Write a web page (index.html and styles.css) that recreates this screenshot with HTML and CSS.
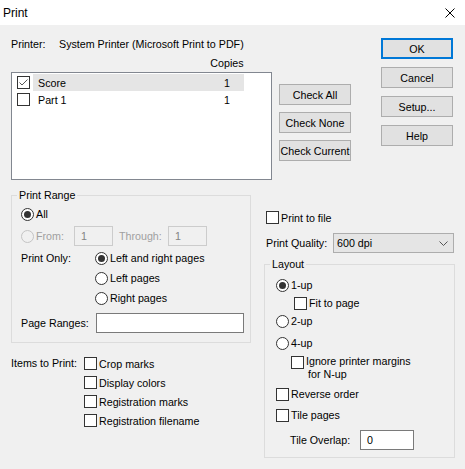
FILE: index.html
```html
<!DOCTYPE html>
<html lang="en">
<head>
  <meta charset="UTF-8">
  <meta name="viewport" content="width=device-width, initial-scale=1.0">
  <title>Print</title>
  <link rel="stylesheet" href="styles.css">
</head>
<body>
  <div class="titlebar">
    <span class="title">Print</span>
    <svg class="close" width="10" height="10" viewBox="0 0 10 10"><path d="M0.5 0.5 L9.5 9.5 M9.5 0.5 L0.5 9.5" stroke="#000" stroke-width="1"/></svg>
  </div>

  <div class="dialog">
    <div class="top">
      <div class="printer-area">
        <div class="printer-row">
          <span class="printer-label">Printer:</span>
          <span>System Printer (Microsoft Print to PDF)</span>
        </div>
        <div class="copies-head"><span class="copies-col">Copies</span></div>
        <div class="list-row">
          <div class="listbox">
            <div class="part">
              <span class="check"><svg width="11" height="11" viewBox="0 0 11 11"><path d="M1.5 5.5 L4 8 L9.5 2.5" fill="none" stroke="#555" stroke-width="1"/></svg></span>
              <div class="part-cell selected"><span class="part-name">Score</span><span class="copies-col">1</span></div>
            </div>
            <div class="part">
              <span class="check"></span>
              <div class="part-cell"><span class="part-name">Part 1</span><span class="copies-col">1</span></div>
            </div>
          </div>
          <div class="btn-col check-btns">
            <button>Check All</button>
            <button>Check None</button>
            <button>Check Current</button>
          </div>
        </div>
      </div>
      <div class="btn-col main-btns">
        <button class="default">OK</button>
        <button>Cancel</button>
        <button>Setup...</button>
        <button>Help</button>
      </div>
    </div>

    <div class="bottom">
      <div class="col-left">
        <fieldset class="group range-group">
          <legend>Print Range</legend>
          <div class="opt all-row"><span class="radio on"></span><span>All</span></div>
          <div class="opt from-row">
            <span class="from-label"><span class="radio disabled"></span><span class="dim">From:</span></span>
            <input class="field small" type="text" value="1" disabled>
            <span class="dim through-label">Through:</span>
            <input class="field small" type="text" value="1" disabled>
          </div>
          <div class="only-row">
            <span class="side-label">Print Only:</span>
            <div class="only-list">
              <div class="opt tall"><span class="radio on"></span><span>Left and right pages</span></div>
              <div class="opt tall"><span class="radio"></span><span>Left pages</span></div>
              <div class="opt tall"><span class="radio"></span><span>Right pages</span></div>
            </div>
          </div>
          <div class="opt ranges-row">
            <span class="side-label">Page Ranges:</span>
            <input class="field ranges" type="text" value="">
          </div>
        </fieldset>

        <div class="items-row">
          <span class="items-label">Items to Print:</span>
          <div class="items-list">
            <div class="opt item"><span class="check"></span><span>Crop marks</span></div>
            <div class="opt item"><span class="check"></span><span>Display colors</span></div>
            <div class="opt item"><span class="check"></span><span>Registration marks</span></div>
            <div class="opt item"><span class="check"></span><span>Registration filename</span></div>
          </div>
        </div>
      </div>

      <div class="col-right">
        <div class="opt file-row"><span class="check"></span><span>Print to file</span></div>
        <div class="opt quality-row">
          <span class="quality-label">Print Quality:</span>
          <div class="select">
            <span>600 dpi</span>
            <svg width="9" height="5" viewBox="0 0 9 5"><path d="M0.5 0.5 L4.5 4.5 L8.5 0.5" fill="none" stroke="#555" stroke-width="1"/></svg>
          </div>
        </div>
        <fieldset class="group layout-group">
          <legend>Layout</legend>
          <div class="opt row-1up"><span class="radio on"></span><span>1-up</span></div>
          <div class="opt sub"><span class="check"></span><span>Fit to page</span></div>
          <div class="opt"><span class="radio"></span><span>2-up</span></div>
          <div class="opt row-4up"><span class="radio"></span><span>4-up</span></div>
          <div class="ignore-row">
            <span class="check"></span>
            <div class="ignore-text">
              <div>Ignore printer margins</div>
              <div class="wrap">for N-up</div>
            </div>
          </div>
          <div class="opt row-reverse"><span class="check"></span><span>Reverse order</span></div>
          <div class="opt row-tile"><span class="check"></span><span>Tile pages</span></div>
          <div class="opt overlap-row">
            <span class="overlap-label">Tile Overlap:</span>
            <input class="field overlap" type="text" value="0">
          </div>
        </fieldset>
      </div>
    </div>
  </div>
</body>
</html>
```

FILE: styles.css
```css
body {
  margin: 0;
  width: 465px;
  height: 469px;
  overflow: hidden;
  background: #f0f0f0;
  font-family: "Liberation Sans", Arial, sans-serif;
  font-size: 10.7px;
  line-height: 14px;
  color: #000;
}

.titlebar {
  height: 25px;
  background: #fff;
  display: flex;
  align-items: center;
  justify-content: space-between;
  padding: 0 10px 0 3px;
}
.title {
  font-size: 12px;
}

.dialog {
  padding-left: 11px;
}

/* top part: printer, parts list, buttons */
.top {
  display: flex;
  height: 155px;
}
.printer-area {
  width: 340px;
}
.printer-row {
  margin-top: 12px;
  height: 14px;
  display: flex;
}
.printer-label {
  width: 48px;
}
.copies-head {
  margin-top: 5px;
  width: 233px;
  display: flex;
  justify-content: flex-end;
}
.copies-col {
  width: 34px;
  text-align: center;
}
.list-row {
  margin-top: 2px;
  display: flex;
  gap: 7px;
}
.listbox {
  width: 261px;
  height: 108px;
  box-sizing: border-box;
  border: 1px solid #828790;
  background: #fff;
  padding: 1px 0 0 5px;
}
.part {
  display: flex;
  align-items: center;
  height: 17px;
  gap: 3px;
}
.part-cell {
  width: 211px;
  height: 17px;
  display: flex;
  align-items: center;
}
.part-cell.selected {
  background: #e5e5e5;
}
.part-name {
  flex: 1;
  padding-left: 5px;
}

.btn-col {
  display: flex;
  flex-direction: column;
}
.check-btns {
  padding-top: 12px;
  gap: 7px;
}
.main-btns {
  margin-left: 30px;
  margin-top: 13px;
  gap: 8px;
}
button {
  width: 72px;
  height: 21px;
  margin: 0;
  padding: 0;
  font: inherit;
  color: #000;
  background: #e1e1e1;
  border: 1px solid #adadad;
  white-space: nowrap;
}
button.default {
  border: 2px solid #0078d7;
}

/* controls */
.check, .radio {
  width: 13px;
  height: 13px;
  box-sizing: border-box;
  border: 1px solid #333;
  background: #fff;
  flex-shrink: 0;
  display: flex;
  align-items: center;
  justify-content: center;
}
.radio {
  border-radius: 50%;
}
.radio.on::after {
  content: "";
  width: 7px;
  height: 7px;
  border-radius: 50%;
  background: #333;
}
.radio.disabled {
  border-color: #c4c4c4;
  background: #f0f0f0;
}
.dim {
  color: #a0a0a0;
}
.field {
  height: 20px;
  box-sizing: border-box;
  margin: 0;
  padding: 0 0 0 6px;
  border: 1px solid #7a7a7a;
  background: #fff;
  font: inherit;
  color: #000;
  outline: none;
}
.field:disabled {
  border-color: #cccccc;
  background: #f0f0f0;
  color: #838383;
}
.opt {
  display: flex;
  align-items: center;
  gap: 2px;
  height: 18px;
}

/* bottom part */
.bottom {
  display: flex;
  gap: 13px;
}
.col-left {
  width: 240px;
}
.col-right {
  width: 191px;
}
.group {
  margin: 0;
  border: 1px solid #dcdcdc;
  min-width: 0;
}
.group legend {
  padding: 0 2px;
  line-height: 14px;
}

.range-group {
  margin-top: 8px;
  padding: 0 6px 9px 9px;
}
.range-group legend {
  margin-left: -4px;
}
.all-row {
  margin-top: 3px;
}
.from-row {
  margin-top: 3px;
  height: 20px;
  gap: 0;
}
.from-label {
  width: 53px;
  display: flex;
  align-items: center;
  gap: 2px;
}
.field.small {
  width: 39px;
}
.through-label {
  width: 49px;
  margin-left: 6px;
}
.only-row {
  margin-top: 2px;
  display: flex;
}
.side-label {
  width: 74px;
  line-height: 20px;
  flex-shrink: 0;
}
.opt.tall {
  height: 20px;
}
.ranges-row {
  margin-top: 5px;
  height: 20px;
  gap: 0;
}
.ranges-row .side-label {
  width: 75px;
}
.field.ranges {
  width: 149px;
}

.items-row {
  margin-top: 11px;
  display: flex;
}
.items-label {
  width: 73px;
  line-height: 19px;
}
.opt.item {
  height: 19px;
}

.file-row {
  margin-top: 31px;
  height: 13px;
  padding-left: 2px;
}
.quality-row {
  margin-top: 9px;
  height: 20px;
  padding-left: 2px;
  gap: 0;
}
.quality-label {
  width: 67px;
}
.select {
  width: 121px;
  height: 20px;
  box-sizing: border-box;
  border: 1px solid #adadad;
  background: #e5e5e5;
  display: flex;
  align-items: center;
  justify-content: space-between;
  padding: 0 5px 0 3px;
}

.layout-group {
  margin-top: 4px;
  padding: 0 6px 7px 11px;
}
.layout-group legend {
  margin-left: -6px;
}
.row-1up {
  margin-top: 5px;
}
.opt.sub {
  padding-left: 18px;
}
.row-4up {
  margin-top: 4px;
}
.ignore-row {
  margin-top: 3px;
  display: flex;
  align-items: flex-start;
  gap: 2px;
  padding-left: 15px;
  line-height: 13px;
}
.ignore-row .check {
  margin-top: 1px;
}
.ignore-text .wrap {
  padding-left: 2px;
}
.row-reverse {
  margin-top: 4px;
}
.row-tile {
  margin-top: 3px;
}
.overlap-row {
  margin-top: 6px;
  height: 20px;
  padding-left: 14px;
  gap: 0;
}
.overlap-label {
  width: 70px;
}
.field.overlap {
  width: 54px;
}
```
